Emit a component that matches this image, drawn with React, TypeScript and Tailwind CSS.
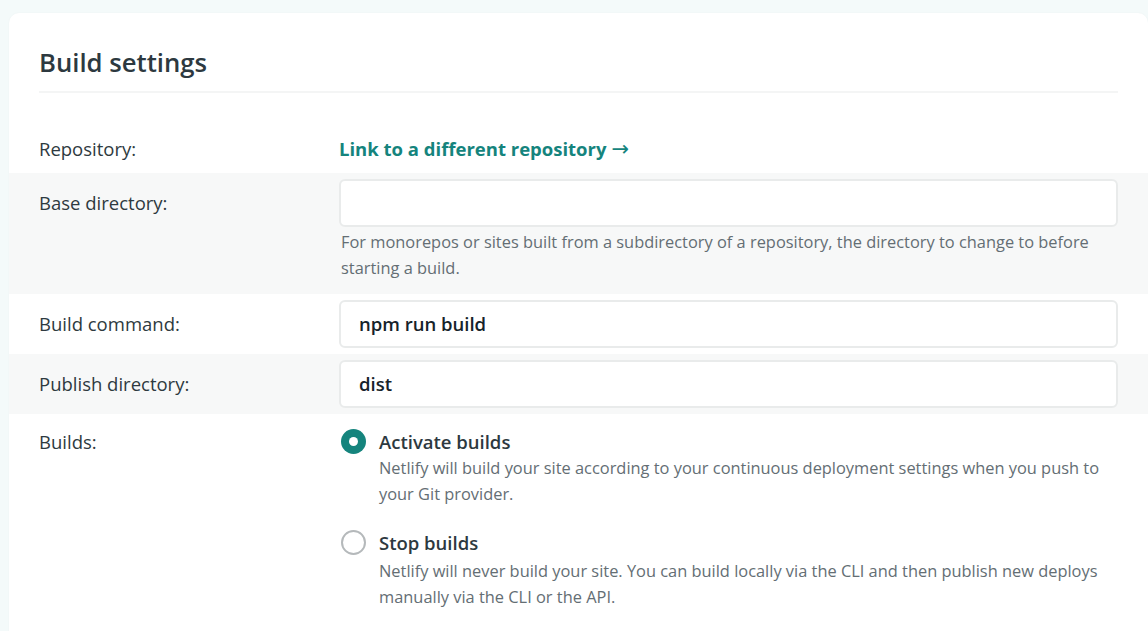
import React from "react";

const font = { fontFamily: '"Open Sans", "Noto Sans", sans-serif' };

function Radio({ checked }: { checked: boolean }) {
  return checked ? (
    <span className="mt-[1px] flex h-[25px] w-[25px] shrink-0 items-center justify-center rounded-full bg-[#15847d]">
      <span className="h-[9px] w-[9px] rounded-full bg-white" />
    </span>
  ) : (
    <span className="mt-[1px] h-[25px] w-[25px] shrink-0 rounded-full border-2 border-[#b5b9bb] bg-white" />
  );
}

function InputRow({ label, value, gray, help }: { label: string; value: string; gray?: boolean; help?: string }) {
  return (
    <div className={`flex px-[30px] py-[6px] ${gray ? "bg-[#f7f8f8]" : "bg-white"} ${help ? "pb-[13px]" : ""}`}>
      <div className="w-[300px] shrink-0 text-[18.5px] leading-[48px] text-[#2e3a40]">{label}</div>
      <div className="flex-1">
        <div className="flex h-[48px] items-center rounded-[6px] border-2 border-[#e9ebeb] bg-white px-[18px] text-[18.5px] font-semibold text-[#16232a]">
          {value}
        </div>
        {help && <p className="mt-[2px] pl-[2px] text-[16.4px] leading-[26px] text-[#646e74]">{help}</p>}
      </div>
    </div>
  );
}

export default function App() {
  return (
    <div className="min-h-screen bg-[#f4fafa] pl-[9px] pt-[13px]" style={font}>
      <div className="h-[700px] rounded-t-[10px] bg-white shadow-[0_0_2px_rgba(0,0,0,0.04)]">
        <div className="px-[30px] pt-[33px]">
          <h2 className="border-b-2 border-[#f4f5f5] pb-[11px] text-[25.7px] font-semibold leading-[34px] text-[#2d3940]">
            Build settings
          </h2>
        </div>
        <div className="mt-[32px] flex h-[48px] items-center px-[30px]">
          <div className="w-[300px] shrink-0 text-[18.5px] text-[#2e3a40]">Repository:</div>
          <a className="flex items-center text-[18.5px] font-bold text-[#15847d]">
            Link to a different repository
            <span
              style={{ fontFamily: '"DejaVu Sans", sans-serif' }}
              className="ml-[5px] inline-block text-[21px] font-normal leading-none"
            >
              →
            </span>
          </a>
        </div>
        <InputRow
          gray
          label="Base directory:"
          value=""
          help="For monorepos or sites built from a subdirectory of a repository, the directory to change to before starting a build."
        />
        <InputRow label="Build command:" value="npm run build" />
        <InputRow gray label="Publish directory:" value="dist" />
        <div className="flex px-[30px] pt-[14px]">
          <div className="w-[300px] shrink-0 text-[18.5px] leading-[27px] text-[#2e3a40]">Builds:</div>
          <div className="flex flex-1 flex-col gap-[22px] pl-[2px] pr-[4px]">
            <div className="flex gap-[13px]">
              <Radio checked />
              <div>
                <div className="text-[18.5px] font-semibold leading-[27px] text-[#2d3940]">Activate builds</div>
                <p className="text-[16.4px] leading-[26px] text-[#646e74]">
                  Netlify will build your site according to your continuous deployment settings when you push to your Git provider.
                </p>
              </div>
            </div>
            <div className="flex gap-[13px]">
              <Radio checked={false} />
              <div>
                <div className="text-[18.5px] font-semibold leading-[27px] text-[#2d3940]">Stop builds</div>
                <p className="mt-[2px] text-[16.4px] leading-[26px] text-[#646e74]">
                  Netlify will never build your site. You can build locally via the CLI and then publish new deploys manually via the CLI or the API.
                </p>
              </div>
            </div>
          </div>
        </div>
      </div>
    </div>
  );
}
